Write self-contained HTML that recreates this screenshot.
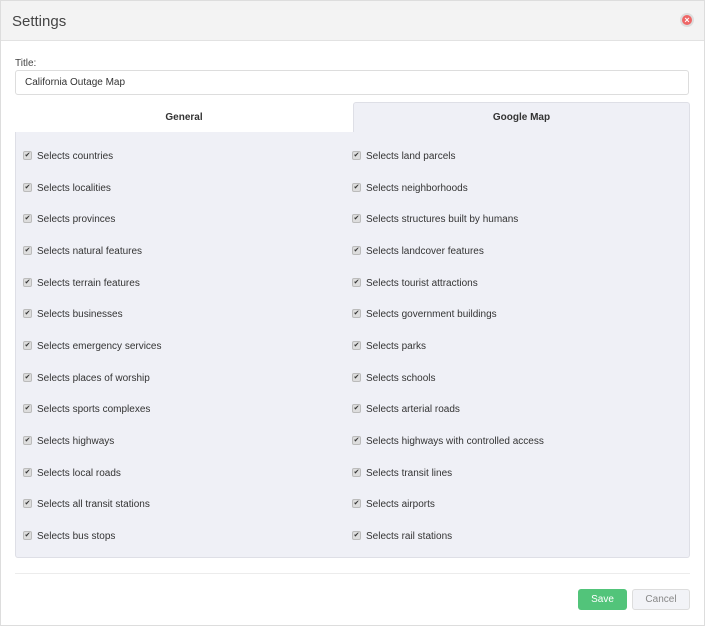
<!DOCTYPE html>
<html><head><style>
*{box-sizing:border-box;margin:0;padding:0}
body{width:705px;height:626px;background:#fff;font-family:"Liberation Sans",sans-serif;color:#333;position:relative;overflow:hidden}
.frame{position:absolute;left:0;top:0;width:705px;height:626px;border:1px solid #ddd}
.hdr{position:absolute;left:1px;top:1px;width:703px;height:40px;background:#f3f3f3;border-bottom:1px solid #e2e2e2}
.hdr h1{position:absolute;left:11px;top:12px;font-size:15px;font-weight:normal;color:#444}
.x{position:absolute;left:679px;top:12px;width:14px;height:14px;border-radius:50%;background:#e66;border:2px solid #ddd;color:#fff;font-size:9px;line-height:10px;text-align:center;font-weight:bold}
.lbl{position:absolute;left:15px;top:58px;font-size:10px;color:#444}
.inp{position:absolute;left:15px;top:70px;width:674px;height:25px;border:1px solid #ddd;border-radius:3px;font-size:10px;padding:6px 9px;color:#333}
.tab1{position:absolute;left:15px;top:103px;width:338px;height:29px;text-align:center;font-size:10px;font-weight:bold;line-height:29px}
.tab2{position:absolute;left:353px;top:102px;width:337px;height:31px;background:#eff0f6;border:1px solid #dedfe6;border-bottom:none;border-radius:3px 3px 0 0;text-align:center;font-size:10px;font-weight:bold;line-height:29px}
.panel{position:absolute;left:15px;top:132px;width:675px;height:426px;background:#eff0f6;border:1px solid #dedfe6;border-top:none;border-radius:0 0 3px 3px}
.it{position:absolute;font-size:10px;color:#333;height:12px;line-height:12px;white-space:nowrap;margin-top:2px}
.cb{display:inline-block;position:relative;top:-3px;width:9px;height:9px;background:#ddd;border:1px solid #bbb;border-radius:2px;vertical-align:-1px;margin-right:5px;font-size:7px;line-height:7px;text-align:center;color:#333}
.div{position:absolute;left:15px;top:573px;width:675px;height:1px;background:#ececec}
.save{position:absolute;left:578px;top:589px;width:49px;height:21px;background:#52c47a;border-radius:3px;color:#fff;font-size:10px;text-align:center;line-height:21px}
.cancel{position:absolute;left:632px;top:589px;width:58px;height:21px;background:#f2f3f7;border:1px solid #ddd;border-radius:3px;color:#888;font-size:10px;text-align:center;line-height:19px}
</style></head><body>
<div class="frame"></div>
<div class="hdr"><h1>Settings</h1><div class="x">×</div></div>
<div class="lbl">Title:</div>
<div class="inp">California Outage Map</div>
<div class="tab1">General</div>
<div class="tab2">Google Map</div>
<div class="panel"></div>
<div class="div"></div>
<div class="save">Save</div>
<div class="cancel">Cancel</div>
<div class="it" style="left:23px;top:149px"><span class="cb">✔</span>Selects countries</div>
<div class="it" style="left:23px;top:181px"><span class="cb">✔</span>Selects localities</div>
<div class="it" style="left:23px;top:212px"><span class="cb">✔</span>Selects provinces</div>
<div class="it" style="left:23px;top:244px"><span class="cb">✔</span>Selects natural features</div>
<div class="it" style="left:23px;top:276px"><span class="cb">✔</span>Selects terrain features</div>
<div class="it" style="left:23px;top:307px"><span class="cb">✔</span>Selects businesses</div>
<div class="it" style="left:23px;top:339px"><span class="cb">✔</span>Selects emergency services</div>
<div class="it" style="left:23px;top:371px"><span class="cb">✔</span>Selects places of worship</div>
<div class="it" style="left:23px;top:402px"><span class="cb">✔</span>Selects sports complexes</div>
<div class="it" style="left:23px;top:434px"><span class="cb">✔</span>Selects highways</div>
<div class="it" style="left:23px;top:466px"><span class="cb">✔</span>Selects local roads</div>
<div class="it" style="left:23px;top:497px"><span class="cb">✔</span>Selects all transit stations</div>
<div class="it" style="left:23px;top:529px"><span class="cb">✔</span>Selects bus stops</div>
<div class="it" style="left:352px;top:149px"><span class="cb">✔</span>Selects land parcels</div>
<div class="it" style="left:352px;top:181px"><span class="cb">✔</span>Selects neighborhoods</div>
<div class="it" style="left:352px;top:212px"><span class="cb">✔</span>Selects structures built by humans</div>
<div class="it" style="left:352px;top:244px"><span class="cb">✔</span>Selects landcover features</div>
<div class="it" style="left:352px;top:276px"><span class="cb">✔</span>Selects tourist attractions</div>
<div class="it" style="left:352px;top:307px"><span class="cb">✔</span>Selects government buildings</div>
<div class="it" style="left:352px;top:339px"><span class="cb">✔</span>Selects parks</div>
<div class="it" style="left:352px;top:371px"><span class="cb">✔</span>Selects schools</div>
<div class="it" style="left:352px;top:402px"><span class="cb">✔</span>Selects arterial roads</div>
<div class="it" style="left:352px;top:434px"><span class="cb">✔</span>Selects highways with controlled access</div>
<div class="it" style="left:352px;top:466px"><span class="cb">✔</span>Selects transit lines</div>
<div class="it" style="left:352px;top:497px"><span class="cb">✔</span>Selects airports</div>
<div class="it" style="left:352px;top:529px"><span class="cb">✔</span>Selects rail stations</div>
</body></html>
